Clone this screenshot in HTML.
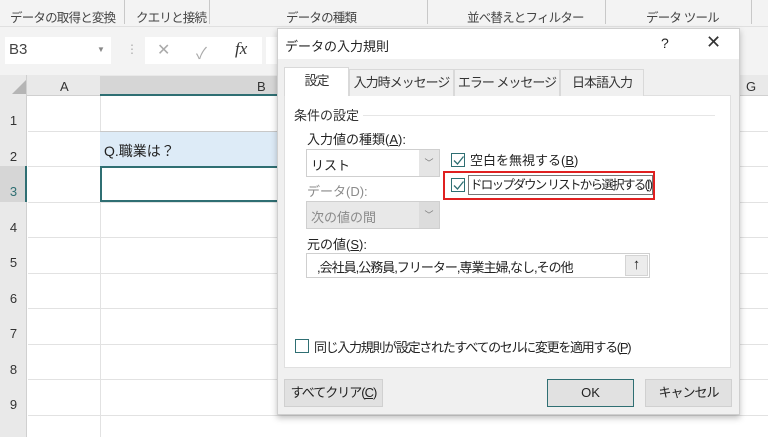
<!DOCTYPE html>
<html><head><meta charset="utf-8"><style>
*{margin:0;padding:0;box-sizing:border-box}
body{width:768px;height:437px;overflow:hidden;background:#fff;font-family:"Liberation Sans","Noto Sans CJK JP",sans-serif;font-size:13px;color:#222;position:relative;white-space:nowrap}
.a{position:absolute}
.rib{left:0;top:0;width:768px;height:27px;background:#f3f3f3;border-bottom:1px solid #e0e0e0}
.rib span{position:absolute;top:7px;font-size:12.5px;color:#444;letter-spacing:-0.8px}
.sep{position:absolute;top:0;width:1px;height:24px;background:#c8c8c8}
.fb{left:0;top:27px;width:768px;height:48px;background:#f3f3f3}
.hl{height:1px;background:#e2e2e2;left:28px;width:740px}
.vl{width:1px;background:#e2e2e2;top:96px;height:341px}
.rn{left:0;width:27px;text-align:center;font-size:13px;color:#333}
.dlg{left:277px;top:28px;width:463px;height:387px;background:#f0f0f0;border:1px solid #cfcfcf;box-shadow:0 3px 6px rgba(0,0,0,.25)}
.tab{top:40px;height:27px;border:1px solid #d9d9d9;border-bottom:none;background:#f0f0f0;font-size:13px;text-align:center;line-height:26px;color:#333;letter-spacing:-1px}
.btn{height:28px;border:1px solid #d0d0d0;background:#e1e1e1;text-align:center;line-height:26px;font-size:13px;color:#222}
.cb{width:14px;height:14px;border:1px solid #2f6f73;background:#fff}
.cb svg{position:absolute;left:1px;top:1px}
.u{text-decoration:underline}
.k{letter-spacing:-1px}
</style></head><body>
<div class="a rib">
<span style="left:10px">データの取得と変換</span><div class="sep" style="left:124px"></div>
<span style="left:136px">クエリと接続</span><div class="sep" style="left:209px"></div>
<span style="left:286px">データの種類</span><div class="sep" style="left:427px"></div>
<span style="left:467px">並べ替えとフィルター</span><div class="sep" style="left:605px"></div>
<span style="left:646px">データ ツール</span><div class="sep" style="left:751px"></div>
</div>
<div class="a fb"></div>
<div class="a" style="left:5px;top:37px;width:106px;height:27px;background:#fff"><span class="a" style="left:4px;top:4px;font-size:15px;color:#444">B3</span><span class="a" style="left:92px;top:8px;font-size:8px;color:#888">▼</span></div>
<div class="a" style="left:126px;top:42px;color:#aaa;font-size:12px">⋮</div>
<div class="a" style="left:145px;top:37px;width:117px;height:27px;background:#fff"><span class="a" style="left:12px;top:3px;color:#aaa;font-size:16px">✕</span><span class="a" style="left:51px;top:3px;color:#aaa;font-size:16px">✓</span><span class="a" style="left:90px;top:2px;font-family:'Liberation Serif',serif;font-style:italic;font-size:17px;color:#333">fx</span></div>
<div class="a" style="left:266px;top:37px;width:12px;height:27px;background:#fff"></div>
<div class="a" style="left:0;top:75px;width:768px;height:21px;background:#e9e9e9;border-bottom:1px solid #d0d0d0"></div>
<div class="a" style="left:0;top:75px;width:27px;height:362px;background:#e9e9e9;border-right:1px solid #d0d0d0"></div>
<div class="a" style="left:12px;top:80px;width:0;height:0;border-left:14px solid transparent;border-bottom:14px solid #b5b5b5"></div>
<div class="a" style="left:100px;top:76px;width:177px;height:20px;background:#d6d6d6;border-bottom:2px solid #2f6f73"></div>
<div class="a" style="left:60px;top:79px;font-size:13px;color:#333">A</div>
<div class="a" style="left:257px;top:79px;font-size:13px;color:#333">B</div>
<div class="a" style="left:746px;top:79px;font-size:13px;color:#333">G</div>
<div class="a" style="left:0;top:166px;width:27px;height:36px;background:#d6d6d6;border-right:2px solid #2f6f73"></div>
<div class="a vl" style="left:100px"></div>
<div class="a hl" style="top:131px"></div><div class="a hl" style="top:166px"></div><div class="a hl" style="top:202px"></div><div class="a hl" style="top:237px"></div><div class="a hl" style="top:273px"></div><div class="a hl" style="top:308px"></div><div class="a hl" style="top:344px"></div><div class="a hl" style="top:379px"></div><div class="a hl" style="top:415px"></div>
<div class="a rn" style="top:113px">1</div><div class="a rn" style="top:149px">2</div><div class="a rn" style="top:184px;color:#2f6f73">3</div><div class="a rn" style="top:220px">4</div><div class="a rn" style="top:255px">5</div><div class="a rn" style="top:291px">6</div><div class="a rn" style="top:326px">7</div><div class="a rn" style="top:362px">8</div><div class="a rn" style="top:397px">9</div>
<div class="a" style="left:100px;top:131px;width:177px;height:35px;background:#ddebf7;border-top:1px solid #c8c8c8"></div>
<div class="a" style="left:104px;top:141px;font-size:14px">Q.職業は？</div>
<div class="a" style="left:100px;top:166px;width:180px;height:36px;border:2px solid #2f6f73"></div>
<div class="a dlg">
<div class="a" style="left:0;top:0;width:461px;height:30px;background:#fff"></div>
<div class="a" style="left:7px;top:7px;font-size:13px">データの入力規則</div>
<div class="a" style="left:383px;top:6px;font-size:14px">?</div>
<div class="a" style="left:428px;top:3px;font-size:18px;color:#333">✕</div>
<div class="a" style="left:6px;top:66px;width:447px;height:273px;background:#fff;border:1px solid #e0e0e0"></div>
<div class="a tab" style="left:6px;width:65px;height:29px;top:38px;background:#fff">設定</div>
<div class="a tab" style="left:71px;width:105px">入力時メッセージ</div>
<div class="a tab" style="left:176px;width:106px">エラー メッセージ</div>
<div class="a tab" style="left:282px;width:84px">日本語入力</div>
<div class="a" style="left:16px;top:76px;font-size:13px;color:#333">条件の設定</div>
<div class="a" style="left:85px;top:86px;width:352px;height:1px;background:#e6e6e6"></div>
<div class="a" style="left:29px;top:100px">入力値の種類(<span class="u">A</span>):</div>
<div class="a" style="left:28px;top:120px;width:134px;height:28px;background:#fff;border:1px solid #cfcfcf"><span class="a" style="left:4px;top:5px">リスト</span><div class="a" style="right:0;top:0;width:20px;height:26px;background:#e5e5e5;color:#777;font-size:9px;text-align:center;line-height:26px">﹀</div></div>
<div class="a" style="left:29px;top:152px;color:#8a8a8a">データ(D):</div>
<div class="a" style="left:28px;top:172px;width:134px;height:28px;background:#e8e8e8;border:1px solid #cfcfcf"><span class="a" style="left:4px;top:5px;color:#8a8a8a">次の値の間</span><div class="a" style="right:0;top:0;width:20px;height:26px;background:#dcdcdc;color:#777;font-size:9px;text-align:center;line-height:26px">﹀</div></div>
<div class="a" style="left:29px;top:205px">元の値(<span class="u">S</span>):</div>
<div class="a" style="left:28px;top:224px;width:344px;height:25px;background:#fff;border:1px solid #cfcfcf"><span class="a k" style="left:10px;top:3px">,会社員,公務員,フリーター,専業主婦,なし,その他</span><div class="a" style="left:318px;top:1px;width:23px;height:21px;background:#ececec;border:1px solid #d4d4d4;text-align:center;font-weight:bold;font-size:15px;line-height:18px">↑</div></div>
<div class="a cb" style="left:173px;top:124px"><svg width="11" height="11"><path d="M1 5.5 L4.5 9 L10.5 1.5" stroke="#2f6f73" stroke-width="1.3" fill="none"/></svg></div>
<div class="a" style="left:192px;top:121px">空白を無視する(<span class="u">B</span>)</div>
<div class="a" style="left:165px;top:142px;width:212px;height:29px;border:2px solid #e02020"></div>
<div class="a cb" style="left:173px;top:149px"><svg width="11" height="11"><path d="M1 5.5 L4.5 9 L10.5 1.5" stroke="#2f6f73" stroke-width="1.3" fill="none"/></svg></div>
<div class="a" style="left:190px;top:146px;border:1px solid #777;padding:0 1px;height:20px;line-height:18px;letter-spacing:-1.7px;font-size:12.5px">ドロップダウン リストから選択する(<span class="u">I</span>)</div>
<div class="a cb" style="left:17px;top:310px;width:14px;height:14px"></div>
<div class="a k" style="left:36px;top:308px;letter-spacing:-1.3px">同じ入力規則が設定されたすべてのセルに変更を適用する(<span class="u">P</span>)</div>
<div class="a btn k" style="left:6px;top:350px;width:99px">すべてクリア(<span class="u">C</span>)</div>
<div class="a btn" style="left:269px;top:350px;width:87px;border-color:#2f6f73">OK</div>
<div class="a btn k" style="left:367px;top:350px;width:87px">キャンセル</div>
</div>
</body></html>
